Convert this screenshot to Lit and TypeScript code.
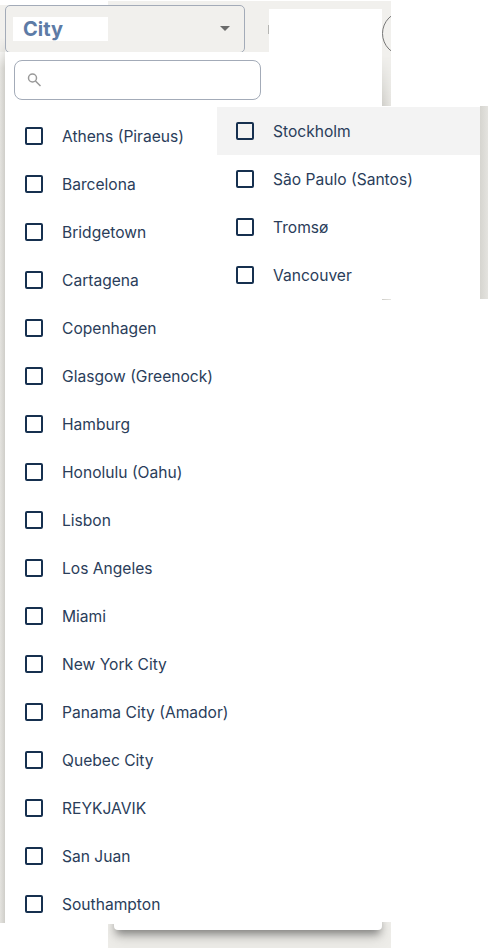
import { LitElement, html, css } from "lit";
import { customElement } from "lit/decorators.js";

const LEFT = ["Athens (Piraeus)","Barcelona","Bridgetown","Cartagena","Copenhagen","Glasgow (Greenock)","Hamburg","Honolulu (Oahu)","Lisbon","Los Angeles","Miami","New York City","Panama City (Amador)","Quebec City","REYKJAVIK","San Juan","Southampton"];
const RIGHT = ["Stockholm","São Paulo (Santos)","Tromsø","Vancouver"];

@customElement("app-root")
export class AppRoot extends LitElement {
  static styles = css`
    :host { display: block; position: relative; width: 500px; height: 948px; overflow: hidden; background: #fff; font-family: Inter, "Liberation Sans", sans-serif; }
    .back-top { position: absolute; left: 108px; top: 1px; width: 283px; height: 105px; background: #f1f0ed; }
    .back-bottom { position: absolute; left: 108px; top: 922px; width: 283px; height: 26px; background: #eeede9; overflow: hidden; }
    .sheet-end { position: absolute; left: 6px; top: -10px; width: 268px; height: 18px; background: #fff; border-radius: 0 0 4px 4px; box-shadow: 0 6px 8px -2px rgba(0,0,0,.42), 0 10px 16px 0 rgba(0,0,0,.08); }
    .selectwrap { position: absolute; left: 0; top: 5px; width: 269px; height: 47px; background: #f1f0ed; }
    .select { position: absolute; left: 5px; top: 0; width: 240px; height: 48px; box-sizing: border-box; border: 1px solid #a3abb8; border-radius: 5px; }
    .label { position: absolute; left: 13px; top: 12px; width: 95px; height: 24px; background: #fff; color: #5d7ba6; font-weight: 700; font-size: 20px; line-height: 24px; box-sizing: border-box; padding-left: 10px; }
    .caret { position: absolute; left: 220px; top: 21px; width: 0; height: 0; border-left: 5.5px solid transparent; border-right: 5.5px solid transparent; border-top: 5.5px solid #6b6b6b; }
    .patch { position: absolute; left: 269px; top: 9px; width: 113px; height: 97px; background: #fff; }
    .sliver { position: absolute; left: 268px; top: 25px; width: 1px; height: 9px; background: #b5b5b2; }
    .clip { position: absolute; left: 382px; top: 9px; width: 9px; height: 50px; overflow: hidden; }
    .circle { width: 45px; height: 45px; margin-top: 2px; border: 1px solid #777; border-radius: 50%; box-sizing: border-box; }
    .panel { position: absolute; left: 5px; top: 52px; width: 377px; height: 872px; background: #fff; display: flex; flex-direction: column; }
    .fade { background: linear-gradient(to right, #cfcec9, #e6e5e1); -webkit-mask-image: linear-gradient(to bottom, transparent, #000 100%); mask-image: linear-gradient(to bottom, transparent, #000 100%); }
    .fade-right { position: absolute; left: 382px; top: 56px; width: 9px; height: 50px; }
    .fade-left { position: absolute; left: 0; top: 38px; width: 5px; height: 30px; background: linear-gradient(to right, #e4e3df, #cfcec9); }
    .strip { position: absolute; left: 0; top: 68px; width: 5px; height: 855px; background: linear-gradient(to right, #e4e3df, #cfcec9); }
    .mark { position: absolute; left: 382px; top: 299px; width: 9px; height: 1px; background: linear-gradient(to right, #cfcec9, #e6e5e1); }
    .search { margin: 8px 0 0 9px; width: 247px; height: 40px; box-sizing: border-box; border: 1px solid #a3abb8; border-radius: 8px; display: flex; align-items: center; padding-left: 12px; flex: none; }
    .list { margin-top: 12px; }
    .row { height: 48px; display: flex; align-items: center; gap: 19px; padding-left: 20px; color: #2a3d5a; font-size: 15.6px; }
    .box { flex: none; width: 18px; height: 18px; box-sizing: border-box; border: 2px solid #16304f; border-radius: 2px; }
    .float { position: absolute; left: 217px; top: 107px; width: 263px; height: 192px; background: #fff; }
    .float .row { padding-left: 19px; }
    .float .hover { background: #f3f3f3; }
    .shade { position: absolute; left: 480px; top: 106px; width: 8px; height: 193px; background: linear-gradient(to right, #d6d5d0, #e4e3df); }
  `;
  row(t: string, cls = "") {
    return html`<div class="row ${cls}"><span class="box"></span><span>${t}</span></div>`;
  }
  render() {
    return html`
      <div class="back-top"></div>
      <div class="back-bottom"><div class="sheet-end"></div></div>
      <div class="selectwrap">
        <div class="select"></div>
        <div class="label">City</div>
        <div class="caret"></div>
      </div>
      <div class="patch"></div>
      <div class="sliver"></div>
      <div class="clip"><div class="circle"></div></div>
      <div class="fade fade-right"></div>
      <div class="fade fade-left"></div>
      <div class="strip"></div>
      <div class="mark"></div>
      <div class="panel">
        <div class="search">
          <svg width="16" height="16" viewBox="0 0 16 16" fill="none" stroke="#999" stroke-width="1.5"><circle cx="5.5" cy="6" r="4"/><path d="M8.5 9l5 5"/></svg>
        </div>
        <div class="list">${LEFT.map((t) => this.row(t))}</div>
      </div>
      <div class="shade"></div>
      <div class="float">${RIGHT.map((t, i) => this.row(t, i === 0 ? "hover" : ""))}</div>
    `;
  }
}
